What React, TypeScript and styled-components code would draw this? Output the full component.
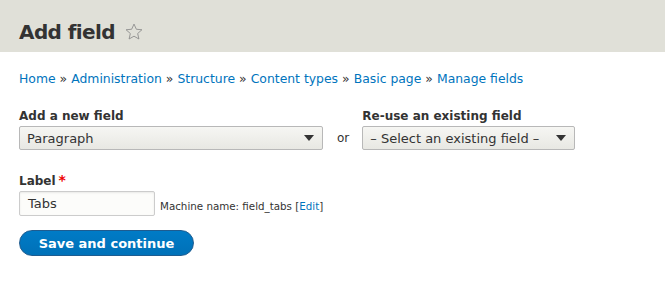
import React from 'react';
import styled, { createGlobalStyle } from 'styled-components';

const GlobalStyle = createGlobalStyle`
  html, body {
    margin: 0;
    padding: 0;
    background: #fff;
  }
  body {
    font-family: "DejaVu Sans", "Liberation Sans", sans-serif;
    color: #333;
  }
`;

const Header = styled.div`
  background: #e0e0d8;
  height: 52px;
  padding: 12px 19px 0;
  display: flex;
  align-items: center;
  box-sizing: border-box;
`;

const Title = styled.h1`
  margin: 0;
  font-size: 20px;
  font-weight: bold;
  color: #333;
  letter-spacing: -0.6px;
`;

const Star = styled.svg`
  margin-left: 9px;
  width: 20px;
  height: 20px;
`;

const Content = styled.div`
  padding: 0 19px;
`;

const Breadcrumb = styled.nav`
  margin-top: 19px;
  font-size: 12.4px;
  color: #333;

  a {
    color: #0074bd;
    text-decoration: none;
  }
  span {
    margin: 0 4px;
  }
`;

const FieldRow = styled.div`
  display: flex;
  align-items: flex-end;
  margin-top: 23px;
`;

const FormItem = styled.div`
  display: flex;
  flex-direction: column;
`;

const Label = styled.label`
  font-size: 12px;
  font-weight: bold;
  color: #333;
  margin-bottom: 3px;
`;

const Required = styled.span`
  color: #e00;
  margin-left: 3px;
  font-size: 14px;
`;

const Select = styled.div<{ $width: number }>`
  width: ${(p) => p.$width}px;
  height: 24px;
  box-sizing: border-box;
  border: 1px solid #b8b8b8;
  border-radius: 2px;
  background: linear-gradient(#f6f6f3, #e8e8e3);
  display: flex;
  align-items: center;
  justify-content: space-between;
  padding: 0 8px 0 7px;
  font-size: 13px;
  color: #333;
`;

const Arrow = styled.span`
  width: 0;
  height: 0;
  border-left: 5px solid transparent;
  border-right: 5px solid transparent;
  border-top: 6px solid #333;
`;

const Or = styled.div`
  font-size: 12px;
  color: #333;
  padding: 0 13px 5px 14px;
`;

const LabelItem = styled(FormItem)`
  margin-top: 22px;
`;

const InputRow = styled.div`
  display: flex;
  align-items: center;
`;

const Input = styled.div`
  width: 136px;
  height: 25px;
  box-sizing: border-box;
  border: 1px solid #ccc;
  border-radius: 2px;
  background: #fcfcfa;
  box-shadow: inset 0 1px 2px rgba(0, 0, 0, 0.08);
  display: flex;
  align-items: center;
  padding: 0 8px;
  font-size: 13px;
  color: #333;
`;

const Machine = styled.span`
  font-size: 10.3px;
  color: #333;
  margin-left: 5px;
  padding-top: 4px;

  a {
    color: #0074bd;
    text-decoration: none;
  }
`;

const Button = styled.button`
  margin-top: 14px;
  width: 175px;
  height: 26px;
  border: 1px solid #1e5c90;
  border-radius: 20px;
  background: linear-gradient(#007bc6, #0071b8);
  color: #fff;
  font-family: inherit;
  font-size: 13px;
  font-weight: bold;
  padding: 0;
  cursor: pointer;
`;

export default function App() {
  return (
    <>
      <GlobalStyle />
      <Header>
        <Title>Add field</Title>
        <Star viewBox="0 0 24 24">
          <path
            d="M12 2.5l2.8 6.2 6.7.6-5.1 4.5 1.5 6.6L12 17l-5.9 3.4 1.5-6.6-5.1-4.5 6.7-.6z"
            fill="none"
            stroke="#888"
            strokeWidth="1"
            strokeLinejoin="round"
          />
        </Star>
      </Header>
      <Content>
        <Breadcrumb>
          <a href="#">Home</a><span>»</span>
          <a href="#">Administration</a><span>»</span>
          <a href="#">Structure</a><span>»</span>
          <a href="#">Content types</a><span>»</span>
          <a href="#">Basic page</a><span>»</span>
          <a href="#">Manage fields</a>
        </Breadcrumb>
        <FieldRow>
          <FormItem>
            <Label>Add a new field</Label>
            <Select $width={304}>
              Paragraph
              <Arrow />
            </Select>
          </FormItem>
          <Or>or</Or>
          <FormItem>
            <Label>Re-use an existing field</Label>
            <Select $width={213}>
              – Select an existing field –
              <Arrow />
            </Select>
          </FormItem>
        </FieldRow>
        <LabelItem>
          <Label>
            Label<Required>*</Required>
          </Label>
          <InputRow>
            <Input>Tabs</Input>
            <Machine>
              Machine name: field_tabs [<a href="#">Edit</a>]
            </Machine>
          </InputRow>
        </LabelItem>
        <Button>Save and continue</Button>
      </Content>
    </>
  );
}
